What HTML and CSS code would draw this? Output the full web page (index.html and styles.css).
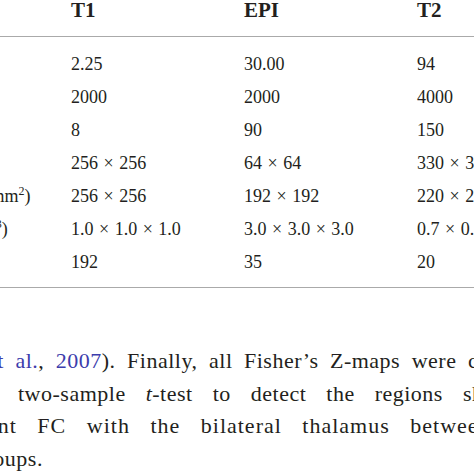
FILE: index.html
```html
<!DOCTYPE html>
<html>
<head>
	<link rel="stylesheet" href="styles.css">
</head>
<body>
	<div class="page">
		<table class="params">
			<colgroup>
				<col class="col-label">
				<col class="col-seq">
				<col class="col-seq">
				<col class="col-last">
			</colgroup>
			<thead>
				<tr>
					<th>Parameters</th>
					<th>T1</th>
					<th>EPI</th>
					<th>T2</th>
				</tr>
			</thead>
			<tbody>
				<tr class="first">
					<td>TE (ms)</td>
					<td>2.25</td>
					<td>30.00</td>
					<td>94</td>
				</tr>
				<tr>
					<td>TR (ms)</td>
					<td>2000</td>
					<td>2000</td>
					<td>4000</td>
				</tr>
				<tr>
					<td>Flip (°)</td>
					<td>8</td>
					<td>90</td>
					<td>150</td>
				</tr>
				<tr>
					<td>Matrix</td>
					<td>256 × 256</td>
					<td>64 × 64</td>
					<td>330 × 330</td>
				</tr>
				<tr>
					<td>Field of view (mm<sup>2</sup>)</td>
					<td>256 × 256</td>
					<td>192 × 192</td>
					<td>220 × 220</td>
				</tr>
				<tr>
					<td>Voxel size (mm<sup>3</sup>)</td>
					<td>1.0 × 1.0 × 1.0</td>
					<td>3.0 × 3.0 × 3.0</td>
					<td>0.7 × 0.7 × 0.7</td>
				</tr>
				<tr class="last">
					<td>Slices</td>
					<td>192</td>
					<td>35</td>
					<td>20</td>
				</tr>
			</tbody>
		</table>

		<div class="body-text">
			<p class="line line-1"><a href="#">et al.</a>, <a href="#">2007</a>). Finally, all Fisher’s Z-maps were compared</p>
			<p class="line line-2">two-sample <i>t</i>-test to detect the regions showing</p>
			<p class="line line-3">significant FC with the bilateral thalamus between</p>
			<p class="line line-4">groups.</p>
		</div>
	</div>
</body>
</html>
```

FILE: styles.css
```css
* {
	box-sizing: border-box;
}

body {
	margin: 0;
	padding: 0;
	background: #fff;
}

.page {
	width: 474px;
	height: 474px;
	overflow: hidden;
	font-family: "Liberation Serif", "Times New Roman", serif;
	color: #231f20;
}

/* table */

.params {
	margin-left: -119px;
	table-layout: fixed;
	width: 755px;
	border-collapse: separate;
	border-spacing: 0;
}

.col-label {
	width: 190px;
}

.col-seq {
	width: 173px;
}

.col-last {
	width: 220px;
}

.params th {
	font-size: 21px;
	font-weight: bold;
	line-height: 21px;
	text-align: left;
	padding: 0 0 15px 0;
	border-bottom: 1px solid #aaa;
	white-space: nowrap;
}

.params td {
	font-size: 18px;
	line-height: 33px;
	padding: 0;
	text-align: left;
	white-space: nowrap;
	word-spacing: 1px;
}

.params .first td {
	padding-top: 11px;
}

.params .last td {
	padding-bottom: 8px;
	border-bottom: 1px solid #aaa;
}

sup {
	font-size: 12px;
	line-height: 0;
	vertical-align: 7px;
}

/* running text */

.body-text {
	margin-top: 57px;
}

.line {
	margin: 0;
	font-size: 22px;
	line-height: 32.5px;
	letter-spacing: 0.5px;
	white-space: nowrap;
}

.line a {
	color: #3c3cac;
	text-decoration: none;
}

.line-1 {
	margin-left: -13px;
	word-spacing: 5.5px;
}

.line-2 {
	padding-left: 18px;
	word-spacing: 14px;
}

.line-3 {
	margin-left: -87px;
	letter-spacing: 1px;
	word-spacing: 14px;
}

.line-4 {
	margin-left: -26px;
}
```
